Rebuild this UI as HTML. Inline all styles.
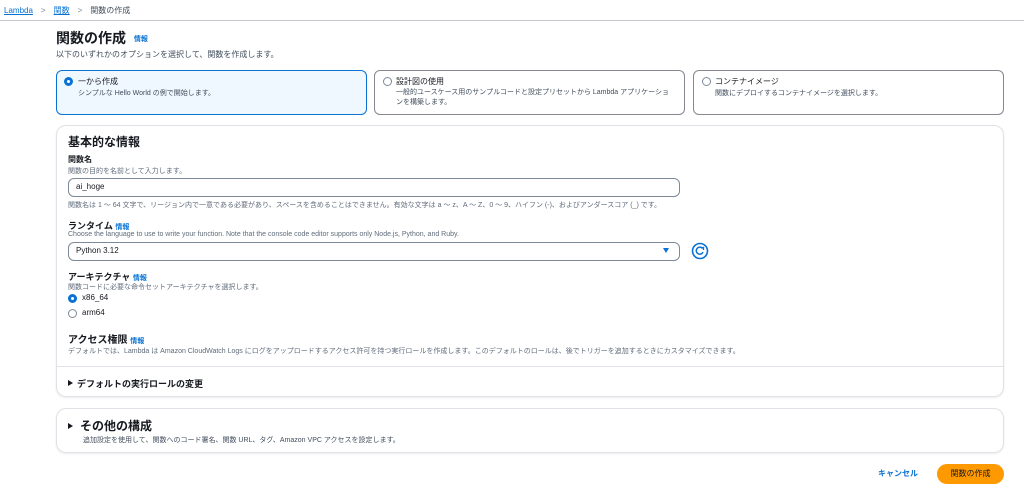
<!DOCTYPE html>
<html><head><meta charset="utf-8"><style>
*{box-sizing:border-box;margin:0;padding:0}
body{width:1024px;height:490px;background:#fff;font-family:"Liberation Sans","Noto Sans CJK JP",sans-serif;color:#16191f;position:relative;overflow:hidden}
.a{position:absolute;white-space:nowrap}
.s{font-size:7px;color:#5f6b7a}
.lk{color:#0972d3}
.info{font-size:7px;color:#0972d3;font-weight:bold}
.card{position:absolute;border:1.5px solid #878790;border-radius:6px;background:#fff}
.rad{position:absolute;width:9px;height:9px;border-radius:50%;border:1px solid #7d8998;background:#fff}
.rad.on{border:3px solid #0972d3}
.panel{position:absolute;border:1px solid #dfe3e7;border-radius:10px;background:#fff;box-shadow:0 1px 2px rgba(0,0,0,.08)}
.lbl{font-size:9px;font-weight:bold}
.tri{display:inline-block;width:0;height:0;border-left:5px solid #16191f;border-top:3.5px solid transparent;border-bottom:3.5px solid transparent;margin-right:4px;vertical-align:1px}
</style></head><body>
<div class="a" style="left:4px;top:5px;font-size:8px"><span class="lk" style="text-decoration:underline">Lambda</span><span style="color:#7d8998;margin:0 8px">&gt;</span><span class="lk" style="text-decoration:underline">関数</span><span style="color:#7d8998;margin:0 8px">&gt;</span><span style="color:#414d5c">関数の作成</span></div>
<div class="a" style="left:0;top:20px;width:1024px;height:1px;background:#c6c6cd"></div>
<div class="a" style="left:56px;top:28px;font-size:14px;font-weight:bold">関数の作成 <span class="info" style="vertical-align:2px;margin-left:4px">情報</span></div>
<div class="a" style="left:56px;top:49px;font-size:8px;color:#414d5c">以下のいずれかのオプションを選択して、関数を作成します。</div>

<div class="card" style="left:56px;top:70px;width:311px;height:45px;border:1.5px solid #0972d3;background:#f0f8ff"></div>
<div class="rad on" style="left:64px;top:77px"></div>
<div class="a" style="left:78px;top:76px;font-size:8px">一から作成</div>
<div class="a s" style="left:78px;top:88px;color:#414d5c">シンプルな Hello World の例で開始します。</div>

<div class="card" style="left:374px;top:70px;width:311px;height:45px"></div>
<div class="rad" style="left:383px;top:77px"></div>
<div class="a" style="left:396px;top:76px;font-size:8px">設計図の使用</div>
<div class="a s" style="left:396px;top:88px;color:#414d5c;line-height:10px">一般的ユースケース用のサンプルコードと設定プリセットから Lambda アプリケーショ<br>ンを構築します。</div>

<div class="card" style="left:693px;top:70px;width:311px;height:45px"></div>
<div class="rad" style="left:702px;top:77px"></div>
<div class="a" style="left:715px;top:76px;font-size:8px">コンテナイメージ</div>
<div class="a s" style="left:715px;top:88px;color:#414d5c">関数にデプロイするコンテナイメージを選択します。</div>

<div class="panel" style="left:56px;top:125px;width:948px;height:272px"></div>
<div class="a" style="left:68px;top:133px;font-size:12px;font-weight:bold">基本的な情報</div>
<div class="a lbl" style="left:68px;top:154px;font-size:8px">関数名</div>
<div class="a s" style="left:68px;top:166px">関数の目的を名前として入力します。</div>
<div class="a" style="left:68px;top:178px;width:612px;height:19px;border:1px solid #7d8998;border-radius:6px"></div>
<div class="a" style="left:76px;top:182px;font-size:8px">ai_hoge</div>
<div class="a s" style="left:68px;top:200px">関数名は 1 ～ 64 文字で、リージョン内で一意である必要があり、スペースを含めることはできません。有効な文字は a ～ z、A ～ Z、0 ～ 9、ハイフン (-)、およびアンダースコア (_) です。</div>

<div class="a lbl" style="left:68px;top:219px">ランタイム <span class="info">情報</span></div>
<div class="a s" style="left:68px;top:231px">Choose the language to use to write your function. Note that the console code editor supports only Node.js, Python, and Ruby.</div>
<div class="a" style="left:68px;top:242px;width:612px;height:19px;border:1px solid #7d8998;border-radius:6px"></div>
<div class="a" style="left:76px;top:246px;font-size:8px">Python 3.12</div>
<div class="a" style="left:663px;top:248px;width:0;height:0;border-top:5px solid #0972d3;border-left:3.5px solid transparent;border-right:3.5px solid transparent"></div>
<svg class="a" style="left:691px;top:242px" width="18" height="18" viewBox="0 0 18 18"><circle cx="9" cy="9" r="7.5" fill="none" stroke="#0972d3" stroke-width="1.6"/><path d="M11.5 6.5A3.5 3.5 0 1 0 12 10" fill="none" stroke="#0972d3" stroke-width="1.5"/><path d="M10 5.5h2.5V8" fill="none" stroke="#0972d3" stroke-width="1.3"/></svg>

<div class="a lbl" style="left:68px;top:270px">アーキテクチャ <span class="info">情報</span></div>
<div class="a s" style="left:68px;top:282px">関数コードに必要な命令セットアーキテクチャを選択します。</div>
<div class="rad on" style="left:68px;top:294px"></div>
<div class="a" style="left:82px;top:293px;font-size:8px">x86_64</div>
<div class="rad" style="left:68px;top:309px"></div>
<div class="a" style="left:82px;top:308px;font-size:8px">arm64</div>

<div class="a lbl" style="left:68px;top:331px;font-size:10px">アクセス権限 <span class="info">情報</span></div>
<div class="a s" style="left:68px;top:346px">デフォルトでは、Lambda は Amazon CloudWatch Logs にログをアップロードするアクセス許可を持つ実行ロールを作成します。このデフォルトのロールは、後でトリガーを追加するときにカスタマイズできます。</div>
<div class="a" style="left:57px;top:366px;width:946px;height:1px;background:#dfe3e7"></div>
<div class="a lbl" style="left:68px;top:377px"><span class="tri"></span>デフォルトの実行ロールの変更</div>

<div class="panel" style="left:56px;top:408px;width:948px;height:45px"></div>
<div class="a" style="left:68px;top:417px;font-size:12px;font-weight:bold"><span class="tri" style="margin-right:7px"></span>その他の構成</div>
<div class="a s" style="left:83px;top:435px;color:#414d5c">追加設定を使用して、関数へのコード署名、関数 URL、タグ、Amazon VPC アクセスを設定します。</div>

<div class="a" style="left:878px;top:468px;font-size:8px;font-weight:bold;color:#0972d3">キャンセル</div>
<div class="a" style="left:937px;top:464px;width:67px;height:20px;border-radius:10px;background:#ff9900;font-size:8px;text-align:center;line-height:20px">関数の作成</div>
</body></html>
